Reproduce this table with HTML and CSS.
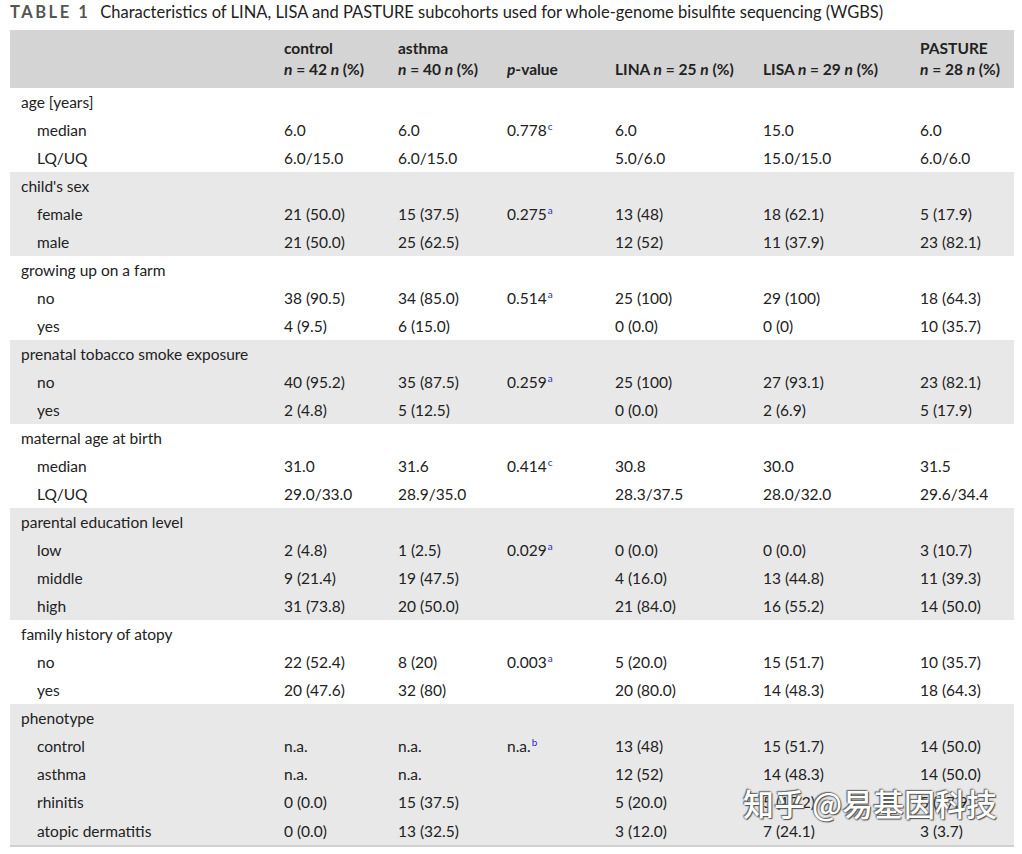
FILE: index.html
```html
<!DOCTYPE html>
<html>
<head>
<meta charset="utf-8">
<link rel="stylesheet" href="styles.css">
</head>
<body>
<div class="page">
  <div class="caption"><span class="tlabel">TABLE 1</span>Characteristics of LINA, LISA and PASTURE subcohorts used for whole-genome bisulfite sequencing (WGBS)</div>
  <div class="wrap">
  <table class="tbl">
    <colgroup>
      <col class="c1"><col class="c2"><col class="c3"><col class="c4"><col class="c5"><col class="c6"><col class="c7">
    </colgroup>
    <thead>
      <tr>
        <th></th>
        <th>control<br><i>n</i> = 42 <i>n</i> (%)</th>
        <th>asthma<br><i>n</i> = 40 <i>n</i> (%)</th>
        <th><i>p</i>-value</th>
        <th>LINA <i>n</i> = 25 <i>n</i> (%)</th>
        <th>LISA <i>n</i> = 29 <i>n</i> (%)</th>
        <th>PASTURE<br><i>n</i> = 28 <i>n</i> (%)</th>
      </tr>
    </thead>
    <tbody class="grp">
      <tr><td colspan="7">age [years]</td></tr>
      <tr><td class="sub">median</td><td>6.0</td><td>6.0</td><td>0.778<sup>c</sup></td><td>6.0</td><td>15.0</td><td>6.0</td></tr>
      <tr><td class="sub">LQ/UQ</td><td>6.0/15.0</td><td>6.0/15.0</td><td></td><td>5.0/6.0</td><td>15.0/15.0</td><td>6.0/6.0</td></tr>
    </tbody>
    <tbody class="grp shade">
      <tr><td colspan="7">child's sex</td></tr>
      <tr><td class="sub">female</td><td>21 (50.0)</td><td>15 (37.5)</td><td>0.275<sup>a</sup></td><td>13 (48)</td><td>18 (62.1)</td><td>5 (17.9)</td></tr>
      <tr><td class="sub">male</td><td>21 (50.0)</td><td>25 (62.5)</td><td></td><td>12 (52)</td><td>11 (37.9)</td><td>23 (82.1)</td></tr>
    </tbody>
    <tbody class="grp">
      <tr><td colspan="7">growing up on a farm</td></tr>
      <tr><td class="sub">no</td><td>38 (90.5)</td><td>34 (85.0)</td><td>0.514<sup>a</sup></td><td>25 (100)</td><td>29 (100)</td><td>18 (64.3)</td></tr>
      <tr><td class="sub">yes</td><td>4 (9.5)</td><td>6 (15.0)</td><td></td><td>0 (0.0)</td><td>0 (0)</td><td>10 (35.7)</td></tr>
    </tbody>
    <tbody class="grp shade">
      <tr><td colspan="7">prenatal tobacco smoke exposure</td></tr>
      <tr><td class="sub">no</td><td>40 (95.2)</td><td>35 (87.5)</td><td>0.259<sup>a</sup></td><td>25 (100)</td><td>27 (93.1)</td><td>23 (82.1)</td></tr>
      <tr><td class="sub">yes</td><td>2 (4.8)</td><td>5 (12.5)</td><td></td><td>0 (0.0)</td><td>2 (6.9)</td><td>5 (17.9)</td></tr>
    </tbody>
    <tbody class="grp">
      <tr><td colspan="7">maternal age at birth</td></tr>
      <tr><td class="sub">median</td><td>31.0</td><td>31.6</td><td>0.414<sup>c</sup></td><td>30.8</td><td>30.0</td><td>31.5</td></tr>
      <tr><td class="sub">LQ/UQ</td><td>29.0/33.0</td><td>28.9/35.0</td><td></td><td>28.3/37.5</td><td>28.0/32.0</td><td>29.6/34.4</td></tr>
    </tbody>
    <tbody class="grp shade">
      <tr><td colspan="7">parental education level</td></tr>
      <tr><td class="sub">low</td><td>2 (4.8)</td><td>1 (2.5)</td><td>0.029<sup>a</sup></td><td>0 (0.0)</td><td>0 (0.0)</td><td>3 (10.7)</td></tr>
      <tr><td class="sub">middle</td><td>9 (21.4)</td><td>19 (47.5)</td><td></td><td>4 (16.0)</td><td>13 (44.8)</td><td>11 (39.3)</td></tr>
      <tr><td class="sub">high</td><td>31 (73.8)</td><td>20 (50.0)</td><td></td><td>21 (84.0)</td><td>16 (55.2)</td><td>14 (50.0)</td></tr>
    </tbody>
    <tbody class="grp">
      <tr><td colspan="7">family history of atopy</td></tr>
      <tr><td class="sub">no</td><td>22 (52.4)</td><td>8 (20)</td><td>0.003<sup>a</sup></td><td>5 (20.0)</td><td>15 (51.7)</td><td>10 (35.7)</td></tr>
      <tr><td class="sub">yes</td><td>20 (47.6)</td><td>32 (80)</td><td></td><td>20 (80.0)</td><td>14 (48.3)</td><td>18 (64.3)</td></tr>
    </tbody>
    <tbody class="grp shade last">
      <tr><td colspan="7">phenotype</td></tr>
      <tr><td class="sub">control</td><td>n.a.</td><td>n.a.</td><td>n.a.<sup>b</sup></td><td>13 (48)</td><td>15 (51.7)</td><td>14 (50.0)</td></tr>
      <tr><td class="sub">asthma</td><td>n.a.</td><td>n.a.</td><td></td><td>12 (52)</td><td>14 (48.3)</td><td>14 (50.0)</td></tr>
      <tr><td class="sub">rhinitis</td><td>0 (0.0)</td><td>15 (37.5)</td><td></td><td>5 (20.0)</td><td>5 (17.2)</td><td>5 (17.9)</td></tr>
      <tr><td class="sub">atopic dermatitis</td><td>0 (0.0)</td><td>13 (32.5)</td><td></td><td>3 (12.0)</td><td>7 (24.1)</td><td>3 (3.7)</td></tr>
    </tbody>
  </table>
  <div class="watermark">知乎 @易基因科技</div>
  </div>
</div>
</body>
</html>
```

FILE: styles.css
```css
html, body {
  margin: 0;
  padding: 0;
  background: #ffffff;
}

.page {
  font-family: Lato, "Liberation Sans", sans-serif;
  color: #222222;
  font-size: 15.5px;
}

.caption {
  height: 25px;
  line-height: 24px;
  padding-left: 10px;
  font-size: 16.5px;
  color: #222222;
}

.tlabel {
  font-weight: 700;
  letter-spacing: 2.5px;
  color: #555555;
  margin-right: 10px;
}

.wrap {
  position: relative;
  margin-left: 10px;
  width: 1004px;
}

.tbl {
  width: 1004px;
  border-collapse: collapse;
  table-layout: fixed;
  margin-top: 5px;
}

.c1 { width: 274px; }
.c2 { width: 114px; }
.c3 { width: 109px; }
.c4 { width: 108px; }
.c5 { width: 148px; }
.c6 { width: 157px; }
.c7 { width: 94px; }

.tbl th {
  background: #d4d4d4;
  font-weight: 700;
  text-align: left;
  vertical-align: bottom;
  line-height: 21px;
  padding: 8px 0 8px 0;
  white-space: nowrap;
}

.tbl td {
  height: 28px;
  padding: 0;
  line-height: 28px;
  text-align: left;
  vertical-align: middle;
  white-space: nowrap;
}

.tbl td:first-child {
  padding-left: 11px;
}

.tbl td.sub {
  padding-left: 27px;
}

.shade td {
  background: #e8e8e8;
}

.last tr:last-child td {
  height: 29px;
  border-bottom: 2px solid #d0d0d0;
}

sup {
  font-size: 10px;
  color: #2b2bc8;
  line-height: 0;
  vertical-align: 6px;
  margin-left: 1px;
}

.watermark {
  position: absolute;
  left: 733px;
  top: 755px;
  font-family: "Noto Sans CJK SC", sans-serif;
  font-size: 31px;
  font-weight: 500;
  line-height: 36px;
  color: #ffffff;
  text-shadow: 0 0 2px #444444, 1px 1px 1px #555555, -1px -1px 1px #777777;
  white-space: nowrap;
}
```
